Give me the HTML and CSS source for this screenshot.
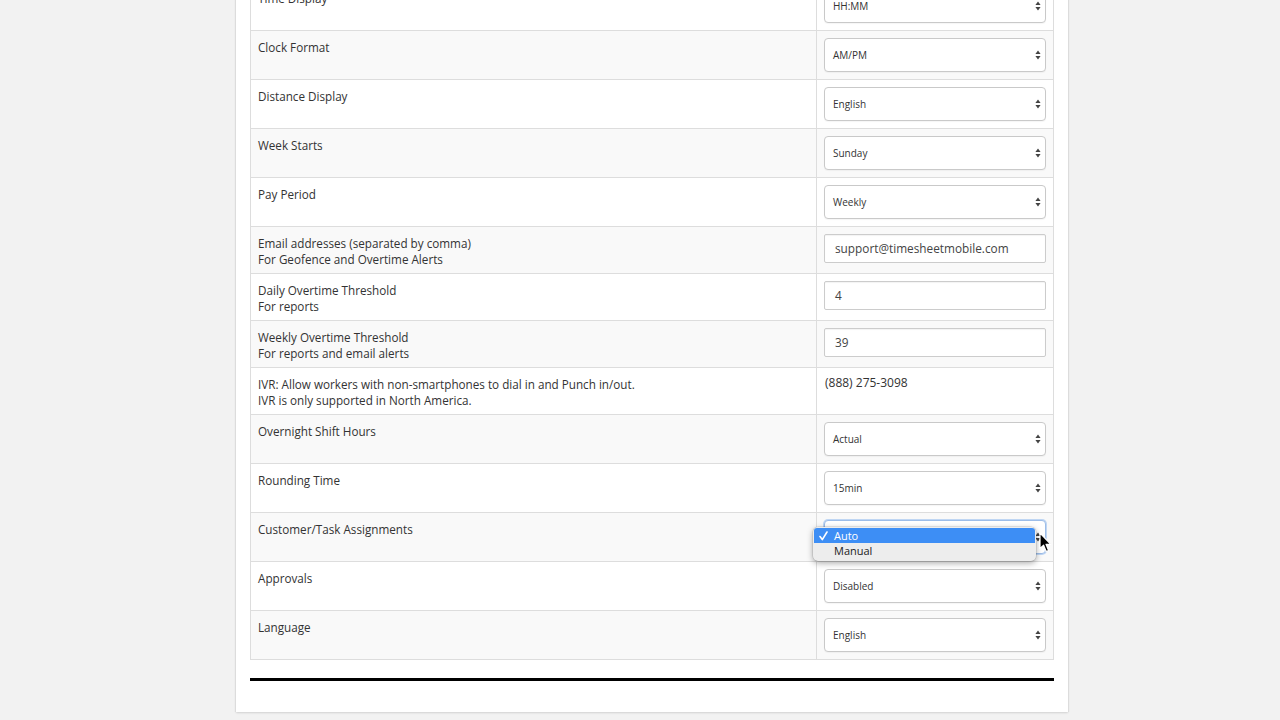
FILE: index.html
```html
<!DOCTYPE html>
<html>
<head>
<meta charset="utf-8">
<link rel="stylesheet" href="styles.css">
</head>
<body>
<div class="panel">
  <table class="settings">
    <tr><td class="label">Time Display</td><td class="ctrl"><div class="select"><span>HH:MM</span><svg class="arrows" width="6" height="10" viewBox="0 0 6 10"><path d="M3 0.5 L5.6 4 H0.4Z M3 9.5 L5.6 6 H0.4Z" fill="#444"/></svg></div></td></tr>
    <tr><td class="label">Clock Format</td><td class="ctrl"><div class="select"><span>AM/PM</span><svg class="arrows" width="6" height="10" viewBox="0 0 6 10"><path d="M3 0.5 L5.6 4 H0.4Z M3 9.5 L5.6 6 H0.4Z" fill="#444"/></svg></div></td></tr>
    <tr><td class="label">Distance Display</td><td class="ctrl"><div class="select"><span>English</span><svg class="arrows" width="6" height="10" viewBox="0 0 6 10"><path d="M3 0.5 L5.6 4 H0.4Z M3 9.5 L5.6 6 H0.4Z" fill="#444"/></svg></div></td></tr>
    <tr><td class="label">Week Starts</td><td class="ctrl"><div class="select"><span>Sunday</span><svg class="arrows" width="6" height="10" viewBox="0 0 6 10"><path d="M3 0.5 L5.6 4 H0.4Z M3 9.5 L5.6 6 H0.4Z" fill="#444"/></svg></div></td></tr>
    <tr><td class="label">Pay Period</td><td class="ctrl"><div class="select"><span>Weekly</span><svg class="arrows" width="6" height="10" viewBox="0 0 6 10"><path d="M3 0.5 L5.6 4 H0.4Z M3 9.5 L5.6 6 H0.4Z" fill="#444"/></svg></div></td></tr>
    <tr><td class="label">Email addresses (separated by comma)<br>For Geofence and Overtime Alerts</td><td class="ctrl"><div class="input">support@timesheetmobile.com</div></td></tr>
    <tr><td class="label">Daily Overtime Threshold<br>For reports</td><td class="ctrl"><div class="input">4</div></td></tr>
    <tr><td class="label">Weekly Overtime Threshold<br>For reports and email alerts</td><td class="ctrl"><div class="input">39</div></td></tr>
    <tr><td class="label">IVR: Allow workers with non-smartphones to dial in and Punch in/out.<br>IVR is only supported in North America.</td><td class="ctrl"><div class="phone">(888) 275-3098</div></td></tr>
    <tr><td class="label">Overnight Shift Hours</td><td class="ctrl"><div class="select"><span>Actual</span><svg class="arrows" width="6" height="10" viewBox="0 0 6 10"><path d="M3 0.5 L5.6 4 H0.4Z M3 9.5 L5.6 6 H0.4Z" fill="#444"/></svg></div></td></tr>
    <tr><td class="label">Rounding Time</td><td class="ctrl"><div class="select"><span>15min</span><svg class="arrows" width="6" height="10" viewBox="0 0 6 10"><path d="M3 0.5 L5.6 4 H0.4Z M3 9.5 L5.6 6 H0.4Z" fill="#444"/></svg></div></td></tr>
    <tr><td class="label">Customer/Task Assignments</td><td class="ctrl open"><div class="select focus"><span></span><svg class="arrows" width="6" height="10" viewBox="0 0 6 10"><path d="M3 0.5 L5.6 4 H0.4Z M3 9.5 L5.6 6 H0.4Z" fill="#444"/></svg></div>
      <div class="popup">
        <div class="opt sel"><svg class="check" width="9" height="10" viewBox="0 0 9 10"><path d="M1 5.5 L3.3 8.6 L8 1" fill="none" stroke="#fff" stroke-width="1.6" stroke-linecap="round" stroke-linejoin="round"/></svg><span>Auto</span></div>
        <div class="opt"><span>Manual</span></div>
      </div>
    </td></tr>
    <tr><td class="label">Approvals</td><td class="ctrl"><div class="select"><span>Disabled</span><svg class="arrows" width="6" height="10" viewBox="0 0 6 10"><path d="M3 0.5 L5.6 4 H0.4Z M3 9.5 L5.6 6 H0.4Z" fill="#444"/></svg></div></td></tr>
    <tr><td class="label">Language</td><td class="ctrl"><div class="select"><span>English</span><svg class="arrows" width="6" height="10" viewBox="0 0 6 10"><path d="M3 0.5 L5.6 4 H0.4Z M3 9.5 L5.6 6 H0.4Z" fill="#444"/></svg></div></td></tr>
  </table>
  <div class="rule"></div>
</div>
<svg class="cursor" width="14" height="22" viewBox="0 0 14 22"><path d="M1 1 L1 16.5 L4.6 13.2 L7.2 19.5 L9.6 18.5 L7 12.3 L11.8 12.3 Z" fill="#000" stroke="#fff" stroke-width="1.2" stroke-linejoin="round"/></svg>
</body>
</html>
```

FILE: styles.css
```css
html, body {
  margin: 0;
  padding: 0;
}
body {
  background: #f2f2f2;
  font-family: "Open Sans", "DejaVu Sans", sans-serif;
  color: #333;
  height: 720px;
  overflow: hidden;
  position: relative;
}
.panel {
  width: 804px;
  margin-left: 236px;
  margin-top: -40px;
  padding: 21px 14px 31px 14px;
  background: #fff;
  box-shadow: 0 1px 2px rgba(0, 0, 0, 0.12), 1px 0 1px rgba(0,0,0,0.05), -1px 0 1px rgba(0,0,0,0.05);
}
.settings {
  width: 804px;
  border-collapse: collapse;
  table-layout: fixed;
}
.settings td {
  border: 1px solid #ddd;
  vertical-align: top;
  padding: 7px 7px;
  font-size: 11.7px;
  line-height: 16px;
}
.settings tr:nth-child(even) td {
  background: #f9f9f9;
}
.settings td.label {
  width: 551px;
  padding-top: 8px;
  padding-bottom: 6px;
}
.settings td.ctrl {
  padding-left: 7px;
  padding-right: 7px;
}
.select {
  box-sizing: border-box;
  width: 222px;
  height: 34px;
  border: 1px solid #c9c9c9;
  border-radius: 4px;
  background: #fff;
  display: flex;
  align-items: center;
  justify-content: space-between;
  padding: 0 4px 0 8px;
  font-size: 10px;
  color: #333;
  box-shadow: 0 1px 1px rgba(0,0,0,0.04);
}
.select.focus {
  border-color: #9dbde8;
  box-shadow: 0 0 0 1px rgba(120, 170, 235, 0.45);
}
.arrows {
  display: block;
}
.input {
  box-sizing: border-box;
  width: 222px;
  height: 29px;
  border: 1px solid #ccc;
  border-radius: 2px;
  background: #fff;
  padding: 0 10px;
  font-size: 11.8px;
  line-height: 27px;
  color: #444;
  box-shadow: inset 0 1px 1px rgba(0,0,0,0.05);
}
.phone {
  padding-left: 1px;
  font-size: 12px;
  color: #333;
}
.ctrl.open {
  position: relative;
}
.popup {
  position: absolute;
  left: -4px;
  top: 14px;
  width: 223px;
  box-sizing: border-box;
  padding: 1px 1px 3px 1px;
  background: #ededed;
  border-radius: 5px;
  box-shadow: 0 2px 6px rgba(0, 0, 0, 0.35), 0 0 0 0.5px rgba(0,0,0,0.15);
  z-index: 5;
}
.opt {
  height: 15px;
  display: flex;
  align-items: center;
  font-size: 11px;
  line-height: 15px;
  color: #222;
  padding-left: 20px;
  position: relative;
}
.opt.sel {
  background: #3d8ef5;
  color: #fff;
  border-radius: 3px 3px 0 0;
}
.check {
  position: absolute;
  left: 5px;
  top: 3px;
}
.rule {
  height: 3px;
  background: #000;
  margin-top: 18px;
}
.cursor {
  position: absolute;
  left: 1039px;
  top: 532px;
  z-index: 10;
}
```
